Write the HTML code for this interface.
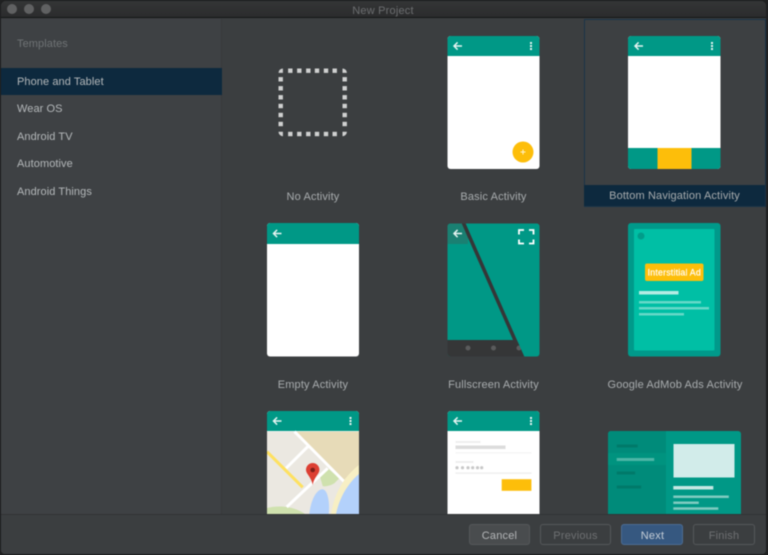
<!DOCTYPE html>
<html><head><meta charset="utf-8">
<style>
html,body{margin:0;padding:0;background:#1f2021;width:768px;height:555px;overflow:hidden}
#w{position:absolute;left:0;top:0;width:768px;height:555px;overflow:hidden;font-family:"Liberation Sans",sans-serif;filter:blur(.5px)}
#w div{position:absolute;box-sizing:border-box}
.t{white-space:nowrap;font-size:11px;line-height:14px;color:#b4b8ba;letter-spacing:.08px}
.l{white-space:nowrap;font-size:11px;line-height:14px;color:#a8acae;text-align:center;letter-spacing:.14px}
.b{top:524px;height:21px;border-radius:3px;font-size:11px;line-height:22px;text-align:center;letter-spacing:.2px}
svg{position:absolute;left:0;top:0}
</style></head><body>
<div id="w">
<div style="left:1px;top:1px;width:765px;height:553px;background:#3b3e40;border-radius:5px 5px 4px 4px"></div>
<div style="left:1px;top:1px;width:765px;height:17px;background:linear-gradient(#343536,#2b2c2d);border-bottom:1px solid #151616;border-radius:5px 5px 0 0"></div>
<div style="left:6.500px;top:3.800px;width:10.500px;height:10.500px;border-radius:50%;background:#606162"></div>
<div style="left:23.500px;top:3.800px;width:10.500px;height:10.500px;border-radius:50%;background:#606162"></div>
<div style="left:40.500px;top:3.800px;width:10.500px;height:10.500px;border-radius:50%;background:#606162"></div>
<div style="left:0;top:3.500px;width:766px;text-align:center;font-size:11px;line-height:14px;color:#6c6e70;letter-spacing:.2px">New Project</div>

<div style="left:1px;top:19px;width:221px;height:495px;background:#3e4144;border-right:1px solid #37393b"></div>
<div class="t" style="left:17px;top:37px;color:#6f7375">Templates</div>
<div style="left:1px;top:68px;width:221px;height:27px;background:#0d293e"></div>
<div class="t" style="left:17px;top:75px">Phone and Tablet</div>
<div class="t" style="left:17px;top:102px">Wear OS</div>
<div class="t" style="left:17px;top:129.500px">Android TV</div>
<div class="t" style="left:17px;top:157px">Automotive</div>
<div class="t" style="left:17px;top:184.500px">Android Things</div>

<div style="left:584px;top:19px;width:182px;height:188px;background:#3d4042;border:1px solid #1a3348"></div>
<div style="left:584px;top:185px;width:181px;height:21px;background:#0d293e"></div>

<svg width="768" height="555" viewBox="0 0 768 555">
<defs>
<clipPath id="c3"><rect x="267" y="411" width="92" height="103"/></clipPath>
<clipPath id="c5"><rect x="447.500" y="223.500" width="92" height="133" rx="3"/></clipPath>
<g id="ar" fill="none" stroke="#e6f4f2" stroke-width="1.500"><path d="M0 0H8M3.600-3.600L0 0L3.600 3.600"/></g>
<g id="dots" fill="#e6f4f2"><rect x="-1" y="-4" width="2" height="2"/><rect x="-1" y="-1" width="2" height="2"/><rect x="-1" y="2" width="2" height="2"/></g>
</defs>

<!-- No activity -->
<g fill="#cfd0d0">
<rect x="288.100" y="68.500" width="4.400" height="4.400"/><rect x="297.100" y="68.500" width="4.400" height="4.400"/><rect x="306.100" y="68.500" width="4.400" height="4.400"/><rect x="314.800" y="68.500" width="4.400" height="4.400"/><rect x="323.800" y="68.500" width="4.400" height="4.400"/><rect x="332.500" y="68.500" width="4.400" height="4.400"/>
<rect x="288.100" y="131.800" width="4.400" height="4.400"/><rect x="297.100" y="131.800" width="4.400" height="4.400"/><rect x="306.100" y="131.800" width="4.400" height="4.400"/><rect x="314.800" y="131.800" width="4.400" height="4.400"/><rect x="323.800" y="131.800" width="4.400" height="4.400"/><rect x="332.500" y="131.800" width="4.400" height="4.400"/>
<rect x="278.500" y="77.100" width="4.400" height="4.400"/><rect x="278.500" y="86.100" width="4.400" height="4.400"/><rect x="278.500" y="95.100" width="4.400" height="4.400"/><rect x="278.500" y="103.800" width="4.400" height="4.400"/><rect x="278.500" y="112.800" width="4.400" height="4.400"/><rect x="278.500" y="121.800" width="4.400" height="4.400"/>
<rect x="342.500" y="77.100" width="4.400" height="4.400"/><rect x="342.500" y="86.100" width="4.400" height="4.400"/><rect x="342.500" y="95.100" width="4.400" height="4.400"/><rect x="342.500" y="103.800" width="4.400" height="4.400"/><rect x="342.500" y="112.800" width="4.400" height="4.400"/><rect x="342.500" y="121.800" width="4.400" height="4.400"/>
<path d="M278.500 72.900A4.400 4.400 0 0 1 282.900 68.500V72.900ZM342.500 68.500A4.400 4.400 0 0 1 346.900 72.900H342.500ZM278.500 131.800H282.900V136.200A4.400 4.400 0 0 1 278.500 131.800ZM342.500 131.800H346.900A4.400 4.400 0 0 1 342.500 136.200Z"/>
</g>

<!-- Basic -->
<rect x="447.500" y="36" width="92" height="133" rx="3" fill="#fff"/>
<path d="M447.500 56V39a3 3 0 0 1 3-3h86a3 3 0 0 1 3 3V56Z" fill="#009886"/>
<use href="#ar" x="454" y="46"/><use href="#dots" x="531" y="46"/>
<circle cx="523" cy="152" r="10.500" fill="#fdbe0a"/>
<path d="M520.500 152h5M523 149.500v5" stroke="#fff3c8" stroke-width="1"/>

<!-- Bottom nav -->
<rect x="628" y="36" width="92.500" height="133" rx="3" fill="#fff"/>
<path d="M628 56V39a3 3 0 0 1 3-3h86.500a3 3 0 0 1 3 3V56Z" fill="#009886"/>
<path d="M628 148H720.500V166a3 3 0 0 1-3 3H631a3 3 0 0 1-3-3Z" fill="#009886"/>
<rect x="657.500" y="148" width="34" height="21" fill="#fdbe0a"/>
<use href="#ar" x="635" y="46"/><use href="#dots" x="712" y="46"/>

<!-- Empty -->
<rect x="267" y="223" width="92" height="133.500" rx="3" fill="#fff"/>
<path d="M267 244V226a3 3 0 0 1 3-3h86a3 3 0 0 1 3 3V244Z" fill="#009886"/>
<use href="#ar" x="273.500" y="233.500"/>

<!-- Fullscreen -->
<g clip-path="url(#c5)">
<rect x="447" y="223" width="93" height="134" fill="#009886"/>
<rect x="447" y="223" width="21" height="21" fill="#1a8072"/>
<rect x="447" y="340" width="93" height="17" fill="#353637"/>
<path d="M461.500 223L465.500 223L524.500 357L520.500 357Z" fill="#353637"/>
<circle cx="468" cy="348" r="2.500" fill="#5a5b5c"/><circle cx="493.500" cy="348" r="2.500" fill="#5a5b5c"/><circle cx="519" cy="348" r="2.500" fill="#5a5b5c"/>
<path d="M465.500 223H540V357H524.500Z" fill="#009886"/>
</g>
<use href="#ar" x="454" y="233.500"/>
<path d="M519 234.500V230H524M529 230H533.500V234.500M533.500 239.500V243.500H529M524 243.500H519V239.500" fill="none" stroke="#fff" stroke-width="1.800"/>

<!-- AdMob -->
<rect x="628" y="223" width="92.500" height="133.500" rx="3" fill="#00998a"/>
<rect x="634" y="229" width="80.500" height="121.500" rx="1" fill="#00bfa5"/>
<circle cx="641" cy="236" r="3.500" fill="#019c8a"/>
<rect x="645" y="263.500" width="58.500" height="17.500" rx="2" fill="#fdbe0a"/>
<text x="674.300" y="275.500" text-anchor="middle" font-family="Liberation Sans" font-size="8.800" letter-spacing=".2" fill="#fff" stroke="#fff" stroke-width=".15">Interstitial Ad</text>
<rect x="639" y="291" width="39.500" height="3.500" fill="#b4ece3"/>
<rect x="639" y="301" width="62" height="2.500" fill="#66d8c8"/>
<rect x="639" y="307" width="70" height="2.500" fill="#66d8c8"/>
<rect x="639" y="313" width="45" height="2.500" fill="#66d8c8"/>

<!-- Maps -->
<g clip-path="url(#c3)">
<rect x="267" y="411" width="92" height="110" rx="3" fill="#fff"/>
<path d="M267 431V414a3 3 0 0 1 3-3h86a3 3 0 0 1 3 3V431Z" fill="#009886"/>
<rect x="267" y="431.500" width="92" height="83" fill="#ebe8e1"/>
<path d="M294.500 431.500H359V465L343 481Z" fill="#e7dbb8"/>
<path d="M267 514V508C278 505 294 506 305 514Z" fill="#cfe1ae"/>
<path d="M319.500 475L327.700 468.300L339.300 478.300L334.300 483.300C330 486 324 487 322.700 486Z" fill="#cfe1ae"/>
<path d="M309.300 514C311 499 317 489 322.700 489.300C328 490 330 504 328.700 514Z" fill="#b3d1fb"/>
<path d="M294.500 431.500L344 481.500M307.700 446.700L286 468.300M327.700 468.300L286.700 507" fill="none" stroke="#fff" stroke-width="3"/>
<path d="M331 514C334 495 343 477 359 465V514Z" fill="#f7efc4"/>
<path d="M336 514C339 500 346 485 359 474V514Z" fill="#b3d1fb"/>
<path d="M267 451.700L302.700 487.300" fill="none" stroke="#fee160" stroke-width="3"/>
<path d="M312.700 485C311.500 477 306 474 306 469.700A6.700 6.700 0 0 1 319.400 469.700C319.400 474 314 477 312.700 485Z" fill="#dc3f32"/>
<circle cx="312.700" cy="470" r="2.300" fill="#7e1f18"/>
</g>
<use href="#ar" x="273.500" y="421"/><use href="#dots" x="350.500" y="421"/>

<!-- Login -->
<g>
<path d="M447.500 514V414a3 3 0 0 1 3-3h86a3 3 0 0 1 3 3V514Z" fill="#fff"/>
<path d="M447.500 431V414a3 3 0 0 1 3-3h86a3 3 0 0 1 3 3V431Z" fill="#009886"/>
<use href="#ar" x="454" y="421"/><use href="#dots" x="531" y="421"/>
<rect x="455.500" y="441" width="25" height="2" fill="#efefef"/>
<rect x="455.500" y="445.500" width="50" height="3.500" fill="#dcdcdc"/>
<rect x="455.500" y="452.300" width="76" height="1.200" fill="#f3f3f3"/>
<rect x="455.500" y="461" width="18" height="2" fill="#efefef"/>
<g fill="#c8c8c8"><circle cx="457" cy="467.700" r="1.600"/><circle cx="462.500" cy="467.700" r="1.600"/><circle cx="468" cy="467.700" r="1.600"/><circle cx="472.700" cy="467.700" r="1.600"/><circle cx="477.500" cy="467.700" r="1.600"/><circle cx="481.700" cy="467.700" r="1.600"/></g>
<rect x="455.500" y="472.500" width="76" height="1.200" fill="#ebebeb"/>
<rect x="501.700" y="479.200" width="29.700" height="11.600" fill="#fdbe0a"/>
</g>

<!-- Master detail -->
<path d="M608 514V434a3 3 0 0 1 3-3h127a3 3 0 0 1 3 3V514Z" fill="#009886"/>
<path d="M608 514V434a3 3 0 0 1 3-3h55V514Z" fill="#008b7a"/>
<rect x="608" y="453" width="58" height="12" fill="#00937f"/>
<rect x="616.700" y="444.500" width="21" height="3" fill="#007a6a"/>
<rect x="616.700" y="458" width="37.500" height="3" fill="#4db6a6"/>
<rect x="616.700" y="471.500" width="18.500" height="3" fill="#007a6a"/>
<rect x="616.700" y="485.500" width="24.500" height="3" fill="#007a6a"/>
<rect x="673.500" y="444" width="61" height="33.500" fill="#d2ecea"/>
<rect x="673.300" y="486" width="40" height="3.500" fill="#c5e8e3"/>
<rect x="673.300" y="495.500" width="55.500" height="2.500" fill="#7fcbc0"/>
<rect x="673.300" y="501.500" width="25.500" height="2.500" fill="#7fcbc0"/>
<rect x="673.300" y="507.300" width="45" height="2.500" fill="#7fcbc0"/>
</svg>

<div class="l" style="left:233px;top:190px;width:160px">No Activity</div>
<div class="l" style="left:413.500px;top:190px;width:160px">Basic Activity</div>
<div class="l" style="left:584px;top:189px;width:181px">Bottom Navigation Activity</div>
<div class="l" style="left:233px;top:378px;width:160px">Empty Activity</div>
<div class="l" style="left:413.500px;top:378px;width:160px">Fullscreen Activity</div>
<div class="l" style="left:595px;top:378px;width:160px">Google AdMob Ads Activity</div>

<div style="left:1px;top:514px;width:765px;height:40px;background:#3b3e40;border-top:1px solid #313335;border-radius:0 0 4px 4px"></div>
<div class="b" style="left:469px;width:61px;background:#494c4e;border:1px solid #55585a;color:#b4b6b8">Cancel</div>
<div class="b" style="left:540px;width:71px;border:1px solid #55585a;color:#6e7072">Previous</div>
<div class="b" style="left:621px;width:62px;background:#365880;border:1px solid #4c6c92;color:#c4cdd6;padding-left:1px">Next</div>
<div class="b" style="left:693px;width:62px;border:1px solid #55585a;color:#6e7072">Finish</div>
</div>
</body></html>
